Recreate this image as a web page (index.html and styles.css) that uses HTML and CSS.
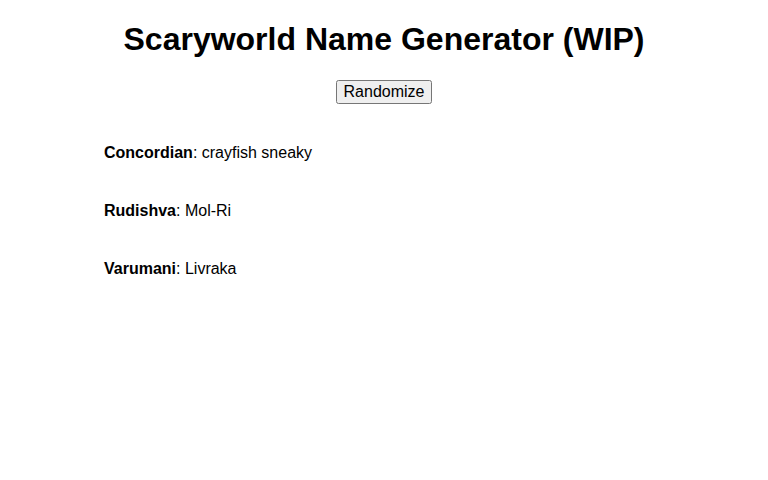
FILE: index.html
```html
<!DOCTYPE html>
<html lang="en">
<head>
    <meta charset="UTF-8">
    <title>Scaryworld Name Generator</title>
    <link rel="stylesheet" href="styles.css">
</head>
<body>
    <h1>Scaryworld Name Generator (WIP)</h1>
    <div class="controls">
        <button id="randomizeBtn">Randomize</button>
    </div>
    <div class="names" id="nameList">
        <p><b>Concordian</b>: crayfish sneaky</p>
        <p><b>Rudishva</b>: Mol-Ri</p>
        <p><b>Varumani</b>: Livraka</p>
    </div>
</body>
</html>
```

FILE: styles.css
```css
body { font-family: "Liberation Sans", Arial, sans-serif; margin: 0; padding: 0; background-color: #fff; color: #000; }
h1 { text-align: center; font-size: 32px; margin: 21px 0 22px; }
.controls { text-align: center; }
.controls button { font-family: "Liberation Sans", Arial, sans-serif; font-size: 16px; padding: 1px 6px; }
.names { max-width: 560px; margin: 0 auto; padding-top: 40px; display: flex; flex-direction: column; gap: 40px; }
.names p { margin: 0; font-size: 16px; }
```
